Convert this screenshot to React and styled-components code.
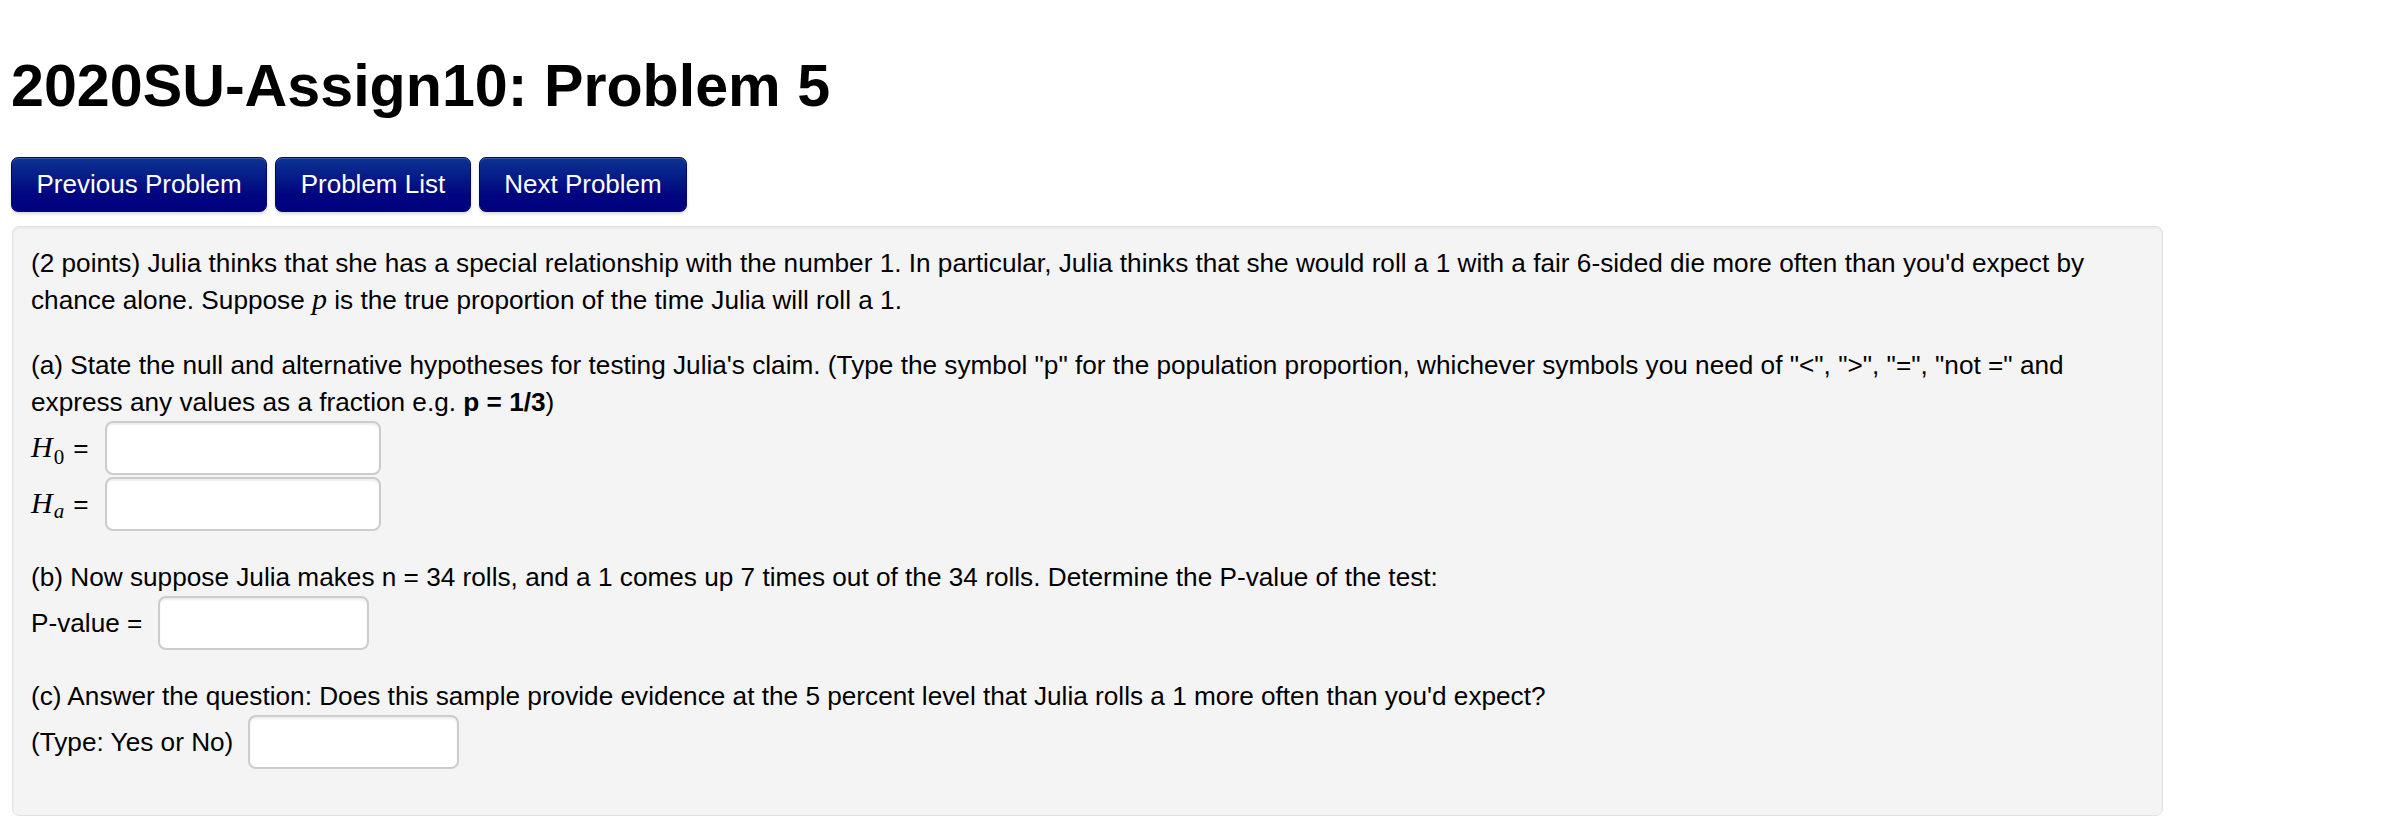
import React from 'react';
import styled, { createGlobalStyle } from 'styled-components';

const GlobalStyle = createGlobalStyle`
  html, body {
    margin: 0;
    padding: 0;
    background: #fff;
  }
  body {
    font-family: "Liberation Sans", Arial, sans-serif;
    font-size: 26.2px;
    line-height: 37px;
    color: #000;
  }
`

const Page = styled.div`
  padding: 0 11px;
`

const Title = styled.h1`
  margin: 53px 0 38px 0;
  font-size: 59.2px;
  line-height: 66px;
  font-weight: 700;
  white-space: nowrap;
`

const NavBar = styled.div`
  display: flex;
  gap: 8px;
  margin-bottom: 14px;
`

const NavButton = styled.button`
  font-family: "Liberation Sans", Arial, sans-serif;
  font-size: 26px;
  line-height: 37px;
  color: #fff;
  padding: 8px 24.5px;
  border: 1px solid #000a6e;
  border-radius: 7px;
  background: linear-gradient(to bottom, #0c3392, #00057f 70%, #000080);
  box-shadow: inset 0 1px 0 rgba(255, 255, 255, 0.18), 0 2px 3px rgba(0, 0, 0, 0.15);
  cursor: pointer;
`

const Well = styled.div`
  width: 2151px;
  box-sizing: border-box;
  margin-left: 1px;
  padding: 18px 18px 20px 18px;
  background: #f4f4f4;
  border: 1px solid #e1e1e1;
  border-radius: 7px;
  box-shadow: inset 0 2px 2px rgba(0, 0, 0, 0.04);
`

const Para = styled.p`
  margin: 0 0 ${p => p.$gap ?? 28}px 0;
`

const MathVar = styled.span`
  font-family: "Liberation Serif", "Times New Roman", serif;
  font-style: italic;
  font-size: 30px;
  line-height: 0;
`

const Sub = styled.span`
  font-family: "Liberation Serif", "Times New Roman", serif;
  font-style: ${p => (p.$italic ? 'italic' : 'normal')};
  font-size: 21px;
  line-height: 0;
  position: relative;
  top: ${p => (p.$italic ? 5 : 7)}px;
  margin-left: 1px;
  margin-right: 9px;
`

const AnswerRow = styled.div`
  display: flex;
  align-items: center;
  gap: ${p => p.$gap ?? 16}px;
  margin-bottom: ${p => p.$after ?? 0}px;
`

const Label = styled.span`
  white-space: nowrap;
`

const AnswerInput = styled.input`
  box-sizing: border-box;
  width: ${p => p.$width}px;
  height: 54px;
  padding: 4px 11px;
  font-family: "Liberation Sans", Arial, sans-serif;
  font-size: 26px;
  background: #fff;
  border: 2px solid #cccccc;
  border-radius: 8px;
  box-shadow: inset 0 2px 2px rgba(0, 0, 0, 0.07);
  outline: none;
`

const App = () => {
  return (
    <Page>
      <GlobalStyle />
      <Title>2020SU-Assign10: Problem 5</Title>

      <NavBar>
        <NavButton>Previous Problem</NavButton>
        <NavButton>Problem List</NavButton>
        <NavButton>Next Problem</NavButton>
      </NavBar>

      <Well>
        <Para>
          (2 points) Julia thinks that she has a special relationship with the number 1. In particular, Julia
          thinks that she would roll a 1 with a fair 6-sided die more often than you'd expect by chance
          alone. Suppose <MathVar>p</MathVar> is the true proportion of the time Julia will roll a 1.
        </Para>

        <Para $gap={0}>
          (a) State the null and alternative hypotheses for testing Julia's claim. (Type the symbol "p" for
          the population proportion, whichever symbols you need of "&lt;", "&gt;", "=", "not =" and express
          any values as a fraction e.g. <b>p = 1/3</b>)
        </Para>
        <AnswerRow $gap={17} $after={2}>
          <Label>
            <MathVar>H</MathVar><Sub>0</Sub>=
          </Label>
          <AnswerInput $width={276} />
        </AnswerRow>
        <AnswerRow $gap={17} $after={28}>
          <Label>
            <MathVar>H</MathVar><Sub $italic>a</Sub>=
          </Label>
          <AnswerInput $width={276} />
        </AnswerRow>

        <Para $gap={0}>
          (b) Now suppose Julia makes n = 34 rolls, and a 1 comes up 7 times out of the 34 rolls. Determine
          the P-value of the test:
        </Para>
        <AnswerRow $after={28}>
          <Label>P-value =</Label>
          <AnswerInput $width={211} />
        </AnswerRow>

        <Para $gap={0}>
          (c) Answer the question: Does this sample provide evidence at the 5 percent level that Julia rolls a
          1 more often than you'd expect?
        </Para>
        <AnswerRow $gap={15} $after={26}>
          <Label>(Type: Yes or No)</Label>
          <AnswerInput $width={211} />
        </AnswerRow>
      </Well>
    </Page>
  );
};

export default App;
